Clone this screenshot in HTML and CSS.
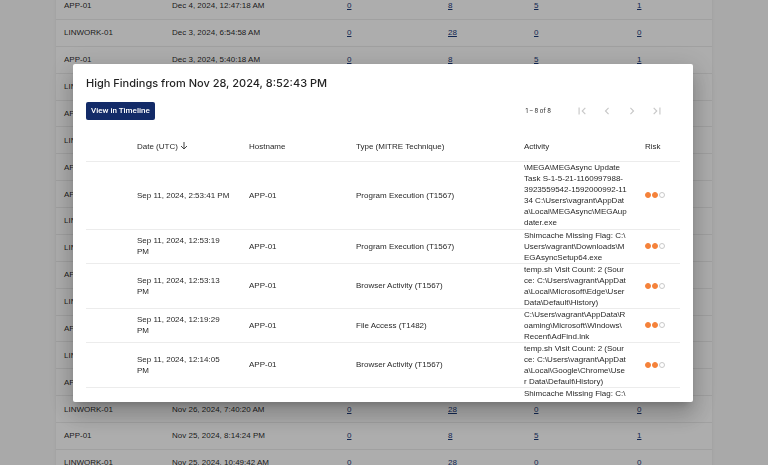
FILE: index.html
```
<!DOCTYPE html>
<html lang="en">
<head>
  <meta charset="UTF-8">
  <meta name="viewport" content="width=device-width, initial-scale=1.0">
  <link rel="stylesheet" href="styles.css">
  <title>Findings</title>
</head>
<body>
  <main class="page">
    <table class="scans">
      <colgroup>
        <col class="scan-host"><col class="scan-date"><col class="scan-a"><col class="scan-b"><col class="scan-c"><col>
      </colgroup>
      <tbody id="scans"></tbody>
    </table>
  </main>

  <div class="backdrop">
    <div class="dialog" role="dialog" aria-modal="true" aria-labelledby="dialog-title">
      <h2 class="dialog-title" id="dialog-title">High Findings from Nov 28, 2024, 8:52:43 PM</h2>
      <div class="toolbar">
        <button class="btn-timeline" type="button">View in Timeline</button>
        <div class="paginator">
          <span class="range">1 – 8 of 8</span>
          <button class="btn-page" type="button" aria-label="First page" disabled>
            <svg viewBox="0 0 24 24"><path d="M18.41 16.59L13.82 12l4.59-4.59L17 6l-6 6 6 6zM6 6h2v12H6z"/></svg>
          </button>
          <button class="btn-page" type="button" aria-label="Previous page" disabled>
            <svg viewBox="0 0 24 24"><path d="M15.41 7.41L14 6l-6 6 6 6 1.41-1.41L10.83 12z"/></svg>
          </button>
          <button class="btn-page" type="button" aria-label="Next page" disabled>
            <svg viewBox="0 0 24 24"><path d="M10 6L8.59 7.41 13.17 12l-4.58 4.59L10 18l6-6z"/></svg>
          </button>
          <button class="btn-page" type="button" aria-label="Last page" disabled>
            <svg viewBox="0 0 24 24"><path d="M5.59 7.41L10.18 12l-4.59 4.59L7 18l6-6-6-6zM16 6h2v12h-2z"/></svg>
          </button>
        </div>
      </div>

      <table class="findings">
        <colgroup>
          <col class="col-check"><col class="col-date"><col class="col-host"><col class="col-type"><col class="col-activity"><col>
        </colgroup>
        <thead>
          <tr>
            <th></th>
            <th>Date (UTC) <svg class="sort" viewBox="0 0 8 8"><path d="M4 0v7M1 4l3 3 3-3"/></svg></th>
            <th>Hostname</th>
            <th>Type (MITRE Technique)</th>
            <th>Activity</th>
            <th>Risk</th>
          </tr>
        </thead>
        <tbody>
          <tr class="tall">
            <td></td>
            <td>Sep 11, 2024, 2:53:41 PM</td>
            <td>APP-01</td>
            <td>Program Execution (T1567)</td>
            <td class="activity">\MEGA\MEGAsync Update<br>Task S-1-5-21-1160997988-<br>3923559542-1592000992-11<br>34 C:\Users\vagrant\AppDat<br>a\Local\MEGAsync\MEGAup<br>dater.exe</td>
            <td><span class="risk"><i class="on"></i><i class="on"></i><i></i></span></td>
          </tr>
          <tr>
            <td></td>
            <td>Sep 11, 2024, 12:53:19<br>PM</td>
            <td>APP-01</td>
            <td>Program Execution (T1567)</td>
            <td class="activity">Shimcache Missing Flag: C:\<br>Users\vagrant\Downloads\M<br>EGAsyncSetup64.exe</td>
            <td><span class="risk"><i class="on"></i><i class="on"></i><i></i></span></td>
          </tr>
          <tr>
            <td></td>
            <td>Sep 11, 2024, 12:53:13<br>PM</td>
            <td>APP-01</td>
            <td>Browser Activity (T1567)</td>
            <td class="activity">temp.sh Visit Count: 2 (Sour<br>ce: C:\Users\vagrant\AppDat<br>a\Local\Microsoft\Edge\User<br>Data\Default\History)</td>
            <td><span class="risk"><i class="on"></i><i class="on"></i><i></i></span></td>
          </tr>
          <tr>
            <td></td>
            <td>Sep 11, 2024, 12:19:29<br>PM</td>
            <td>APP-01</td>
            <td>File Access (T1482)</td>
            <td class="activity">C:\Users\vagrant\AppData\R<br>oaming\Microsoft\Windows\<br>Recent\AdFind.lnk</td>
            <td><span class="risk"><i class="on"></i><i class="on"></i><i></i></span></td>
          </tr>
          <tr>
            <td></td>
            <td>Sep 11, 2024, 12:14:05<br>PM</td>
            <td>APP-01</td>
            <td>Browser Activity (T1567)</td>
            <td class="activity">temp.sh Visit Count: 2 (Sour<br>ce: C:\Users\vagrant\AppDat<br>a\Local\Google\Chrome\Use<br>r Data\Default\History)</td>
            <td><span class="risk"><i class="on"></i><i class="on"></i><i></i></span></td>
          </tr>
          <tr class="last">
            <td></td>
            <td></td>
            <td></td>
            <td></td>
            <td class="activity">Shimcache Missing Flag: C:\</td>
            <td></td>
          </tr>
        </tbody>
      </table>
    </div>
  </div>

  <script src="script.js"></script>
</body>
</html>
```

FILE: styles.css
```
* {
  box-sizing: border-box;
}

body {
  margin: 0;
  height: 100vh;
  overflow: hidden;
  background-color: #fafafa;
  color: rgba(0, 0, 0, 0.87);
  font-family: "Liberation Sans", Arial, sans-serif;
  font-size: 8px;
  line-height: 11px;
}

table {
  width: 100%;
  border-collapse: separate;
  border-spacing: 0;
  table-layout: fixed;
}

th,
td {
  padding: 0;
  text-align: left;
  vertical-align: middle;
  font-weight: normal;
  border-bottom: 1px solid #ececec;
}

/* scan list */

.page {
  padding: 0 56px;
  margin-top: -7px;
}

.scans {
  height: 484px;
  background-color: #fff;
  box-shadow: 0 1px 4px rgba(0, 0, 0, 0.08);
}

.scans td:first-child {
  padding-left: 8px;
}

.scans a {
  color: #1a3a7a;
}

.scan-host { width: 116px; }
.scan-date { width: 175px; }
.scan-a { width: 101px; }
.scan-b { width: 86px; }
.scan-c { width: 103px; }

/* dialog */

.backdrop {
  position: fixed;
  inset: 0;
  display: flex;
  align-items: center;
  justify-content: center;
  padding-right: 2px;
  background-color: rgba(0, 0, 0, 0.32);
}

.dialog {
  width: calc(100% - 146px);
  max-height: calc(100% - 127px);
  overflow: hidden;
  padding: 11px 13px 0;
  background-color: #fff;
  border-radius: 2px;
  box-shadow: 0 6px 8px -4px rgba(0, 0, 0, 0.2),
    0 14px 21px 2px rgba(0, 0, 0, 0.14),
    0 5px 26px 5px rgba(0, 0, 0, 0.12);
}

.dialog-title {
  margin: 0 0 11px;
  font-family: Inter, sans-serif;
  font-size: 11px;
  font-weight: 500;
  line-height: 16px;
}

.toolbar {
  display: flex;
  align-items: center;
  justify-content: space-between;
}

.btn-timeline {
  height: 18px;
  padding: 0 5px;
  background-color: #132b68;
  color: #fff;
  border: none;
  border-radius: 2px;
  font-family: Roboto, sans-serif;
  font-size: 8px;
  font-weight: 500;
  line-height: 18px;
  cursor: pointer;
}

.paginator {
  display: flex;
  align-items: center;
  padding-right: 11px;
}

.range {
  margin-right: 18px;
  font-family: Inter, sans-serif;
  font-size: 6px;
}

.btn-page {
  display: flex;
  align-items: center;
  justify-content: center;
  width: 25px;
  height: 18px;
  padding: 0;
  background: none;
  border: none;
}

.btn-page svg {
  width: 14px;
  height: 14px;
  fill: #c8c8c8;
}

/* findings table */

.findings {
  margin-top: 13px;
}

.findings th {
  height: 29px;
}

.findings .tall td {
  height: 68px;
}

.findings .last td {
  height: 34px;
  vertical-align: top;
}

.col-check { width: 51px; }
.col-date { width: 112px; }
.col-host { width: 107px; }
.col-type { width: 168px; }
.col-activity { width: 121px; }

.activity {
  white-space: nowrap;
}

.sort {
  width: 8px;
  height: 8px;
  vertical-align: -1px;
  fill: none;
  stroke: #444;
  stroke-width: 1;
}

.risk {
  display: flex;
  gap: 1px;
}

.risk i {
  width: 6px;
  height: 6px;
  border: 1px solid #c9c9c9;
  border-radius: 50%;
}

.risk .on {
  background-color: #f5823a;
  border-color: #f5823a;
}
```

FILE: script.js
```
const scans = [
  ['APP-01', 'Dec 4, 2024, 12:47:18 AM'],
  ['LINWORK-01', 'Dec 3, 2024, 6:54:58 AM'],
  ['APP-01', 'Dec 3, 2024, 5:40:18 AM'],
  ['LINWORK-01', ''],
  ['APP-01', ''],
  ['LINWORK-01', ''],
  ['APP-01', ''],
  ['APP-01', ''],
  ['LINWORK-01', ''],
  ['LINWORK-01', ''],
  ['APP-01', ''],
  ['LINWORK-01', ''],
  ['APP-01', ''],
  ['LINWORK-01', ''],
  ['APP-01', ''],
  ['LINWORK-01', 'Nov 26, 2024, 7:40:20 AM'],
  ['APP-01', 'Nov 25, 2024, 8:14:24 PM'],
  ['LINWORK-01', 'Nov 25, 2024, 10:49:42 AM']
];

// finding counts per host
const counts = {
  'APP-01': [0, 8, 5, 1],
  'LINWORK-01': [0, 28, 0, 0]
};

const body = document.getElementById('scans');
scans.forEach(function([host, date]) {
  const row = body.insertRow();
  row.insertCell().textContent = host;
  row.insertCell().textContent = date;
  // counts are linked only for dated scans
  (date ? counts[host] : ['', '', '', '']).forEach(function(count) {
    const cell = row.insertCell();
    if (count !== '') {
      const link = document.createElement('a');
      link.href = '#';
      link.textContent = count;
      cell.appendChild(link);
    }
  });
});
```
